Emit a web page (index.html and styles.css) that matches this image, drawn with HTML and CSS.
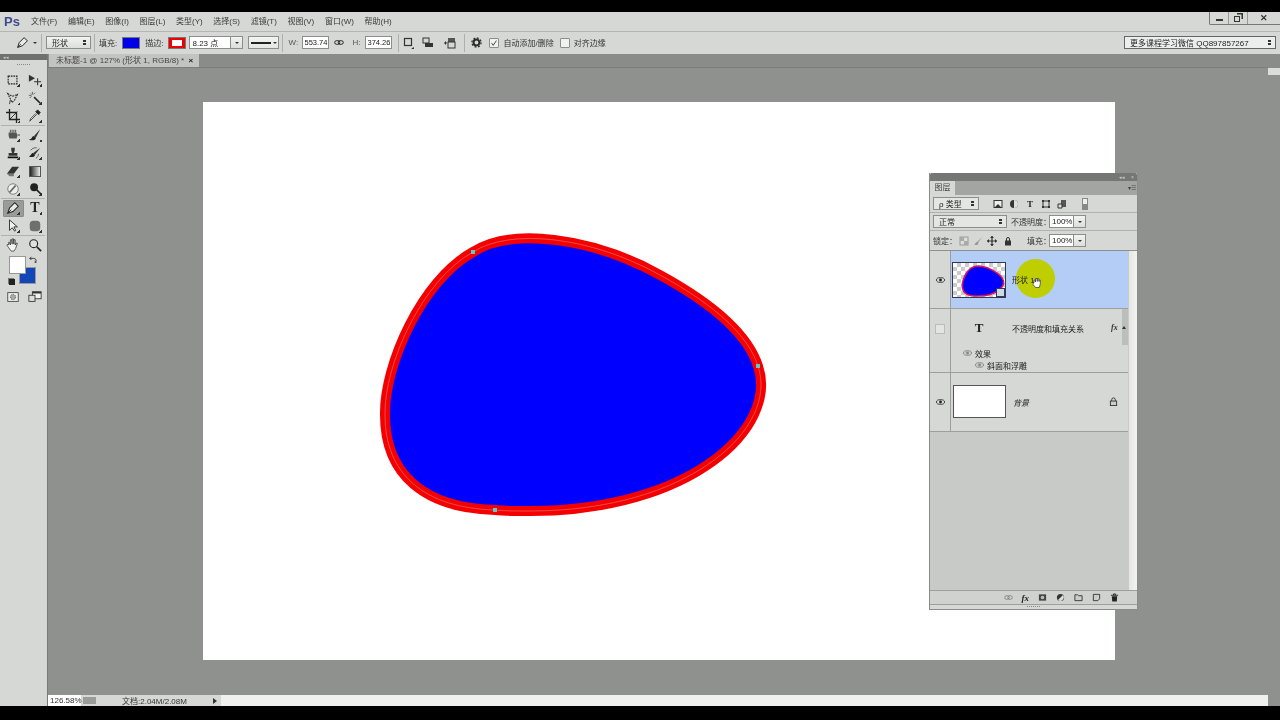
FILE: index.html
```html
<!DOCTYPE html>
<html>
<head>
  <title>Photoshop</title>
  <link rel="stylesheet" href="styles.css">
</head>
<body>
<div class="app">
  <div class="menubar">
    <span class="logo">Ps</span>
    <span class="menu-item">文件(F)</span>
    <span class="menu-item">编辑(E)</span>
    <span class="menu-item">图像(I)</span>
    <span class="menu-item">图层(L)</span>
    <span class="menu-item">类型(Y)</span>
    <span class="menu-item">选择(S)</span>
    <span class="menu-item">滤镜(T)</span>
    <span class="menu-item">视图(V)</span>
    <span class="menu-item">窗口(W)</span>
    <span class="menu-item">帮助(H)</span>
    <div class="win-btns">
      <span class="win-btn"><i class="win-min"></i></span>
      <span class="win-btn"><i class="win-max"></i></span>
      <span class="win-btn win-close">✕</span>
    </div>
  </div>

  <div class="options">
    <svg class="opt-pen" viewBox="0 0 16 16"><path d="M2 14l2-6 6-6 4 4-6 6z" fill="#e8e9e7" stroke="#222" stroke-width="1.2"/><path d="M2 14l4-4" stroke="#222"/></svg>
    <span class="caret opt-caret"></span>
    <span class="sep"></span>
    <span class="select sel-mode">形状<i class="updown"></i></span>
    <span class="sep"></span>
    <span class="opt-label">填充:</span>
    <span class="swatch swatch-fill"></span>
    <span class="opt-label label-stroke">描边:</span>
    <span class="swatch swatch-stroke"><i></i></span>
    <span class="input in-size">8.23 点</span>
    <span class="btn-caret"><span class="caret"></span></span>
    <span class="line-pick"><i></i><span class="caret"></span></span>
    <span class="sep sep-w"></span>
    <span class="opt-label dim">W:</span>
    <span class="input in-num">553.74</span>
    <svg class="opt-link" viewBox="0 0 14 8"><rect x="1" y="1.500" width="7" height="5" rx="2.500" fill="none" stroke="#222" stroke-width="1.400"/><rect x="6" y="1.500" width="7" height="5" rx="2.500" fill="none" stroke="#222" stroke-width="1.400"/></svg>
    <span class="opt-label dim">H:</span>
    <span class="input in-num in-h">374.26</span>
    <span class="sep sep-h"></span>
    <svg class="opt-ico" viewBox="0 0 12 12"><rect x="2.500" y="1.500" width="7" height="7" fill="#d6d8d5" stroke="#333" stroke-width="1.200"/><path d="M9 12h3V10z" fill="#333"/></svg>
    <svg class="opt-ico ico-2" viewBox="0 0 12 12"><rect x="1" y="1" width="6" height="5" fill="#d6d8d5" stroke="#333"/><rect x="3" y="6" width="8" height="4" fill="#333"/></svg>
    <svg class="opt-ico ico-3" viewBox="0 0 12 12"><path d="M0 6h3M1.500 4.500v3" stroke="#333"/><rect x="4" y="1" width="7" height="4" fill="#555"/><rect x="4" y="5" width="7" height="6" fill="#d6d8d5" stroke="#333"/></svg>
    <span class="sep sep-gear"></span>
    <svg class="opt-gear" viewBox="0 0 12 12"><circle cx="6" cy="6" r="3.200" fill="none" stroke="#2b2b2b" stroke-width="2.200"/><circle cx="6" cy="6" r="5" fill="none" stroke="#2b2b2b" stroke-width="1.400" stroke-dasharray="2 1.900"/></svg>
    <span class="check checked"><svg viewBox="0 0 10 10"><path d="M2 5l2 3 4-6" fill="none" stroke="#333" stroke-width="1.100"/></svg></span>
    <span class="opt-label check-text">自动添加/删除</span>
    <span class="check check-2"></span>
    <span class="opt-label check-text">对齐边缘</span>
    <span class="select sel-work">更多课程学习微信 QQ897857267<i class="updown"></i></span>
  </div>

  <div class="workspace">
    <div class="tools">
      <div class="tools-head">◂◂</div>
      <div class="grip"></div>
      <div class="tool-grid">
        <svg class="tool" viewBox="0 0 16 16"><rect x="2.500" y="3.500" width="10" height="9" fill="none" stroke="#222" stroke-width="1.300" stroke-dasharray="2 1"/></svg>
        <svg class="tool" viewBox="0 0 16 16"><path d="M1 2l7 4-7 4z" fill="#333"/><path d="M11 6v8M7 10h8" stroke="#333" stroke-width="1.200"/></svg>
        <svg class="tool" viewBox="0 0 16 16"><path d="M2 3l5 3 6-2-3 6-3 3-2-4z" fill="none" stroke="#222" stroke-width="1.200" stroke-dasharray="2 1"/><path d="M5 10l-1 5" stroke="#333"/></svg>
        <svg class="tool" viewBox="0 0 16 16"><path d="M7 7l7 7" stroke="#222" stroke-width="1.800"/><path d="M5 1v3M1 5h3M3 3l1 1M8 2L6 4M2 8l2-2" stroke="#555"/></svg>
        <svg class="tool" viewBox="0 0 16 16"><path d="M4 0v12h12M0 4h12v12" fill="none" stroke="#222" stroke-width="1.500"/><path d="M4 12L13 3" stroke="#222"/></svg>
        <svg class="tool" viewBox="0 0 16 16"><path d="M10 6l-7 7-1 1 1-3 6-6" fill="#eee" stroke="#333"/><path d="M9 3l4 4M11 1l3 3-2 2-3-3z" fill="#222" stroke="#222"/></svg>
        <div class="tool-line"></div>
        <svg class="tool" viewBox="0 0 16 16"><path d="M3 9V5h9l1 4-1 3H4z" fill="#555"/><path d="M5 2v3M7 2v3M9 2v3M11 2v3" stroke="#444"/><path d="M13 8l3 0" stroke="#333"/></svg>
        <svg class="tool" viewBox="0 0 16 16"><path d="M14 1L7 9l2 2z" fill="#333"/><path d="M7 9c-3 0-2 4-6 4 3 2 8 1 8-2z" fill="#222"/></svg>
        <svg class="tool" viewBox="0 0 16 16"><path d="M6 2h4v3l-1 3h4v3H3V8h4L6 5z" fill="#333"/><rect x="2" y="12" width="12" height="2" fill="#111"/></svg>
        <svg class="tool" viewBox="0 0 16 16"><path d="M14 2L6 8l2 2z" fill="#333"/><path d="M6 8c-3 0-2 3-5 4 3 1 7 1 7-2z" fill="#222"/><path d="M3 5c2-3 5-3 7-3M12 9c0 2-1 4-3 5" fill="none" stroke="#555"/></svg>
        <svg class="tool" viewBox="0 0 16 16"><path d="M1 11l6-8h8l-6 8z" fill="#333"/><path d="M1 11l3 3h5l0-3z" fill="#777"/></svg>
        <div class="tool gradient"></div>
        <svg class="tool" viewBox="0 0 16 16"><circle cx="8" cy="8" r="6" fill="#eee" stroke="#777"/><path d="M4 12l7-8" stroke="#666" stroke-width="2"/></svg>
        <svg class="tool" viewBox="0 0 16 16"><circle cx="7" cy="6" r="4.500" fill="#222"/><path d="M10 9l5 5" stroke="#222" stroke-width="2"/></svg>
        <div class="tool-line"></div>
        <div class="tool-on"><svg class="tool" viewBox="0 0 16 16"><path d="M2 14l2-6 6-6 4 4-6 6z" fill="#e8e9e7" stroke="#222" stroke-width="1.200"/><path d="M2 14l4-4" stroke="#222"/></svg></div>
        <span class="tool tool-t">T</span>
        <svg class="tool" viewBox="0 0 16 16"><path d="M4 1v12l3-3 3 4 1-1-2-4h4z" fill="#f2f2f2" stroke="#222"/></svg>
        <svg class="tool" viewBox="0 0 16 16"><rect x="2" y="2" width="12" height="12" rx="4" fill="#6e706d"/></svg>
        <div class="tool-line"></div>
        <svg class="tool no-tri" viewBox="0 0 16 16"><path d="M3 8V5h1l1 3V2h1.500l.5 5V1h1.500l.5 6V2h1.500v6l1-2h1.500l-2 6-2 3H6L3 11 1 8l1-1z" fill="#f4f4f4" stroke="#222" stroke-width=".8"/></svg>
        <svg class="tool no-tri" viewBox="0 0 16 16"><circle cx="6.500" cy="6.500" r="4.500" fill="#dfe0de" stroke="#222" stroke-width="1.300"/><path d="M10 10l5 5" stroke="#222" stroke-width="2"/></svg>
      </div>
      <div class="colors">
        <span class="color-bg"></span>
        <span class="color-fg"></span>
        <span class="color-reset"></span>
        <svg class="color-swap" viewBox="0 0 10 10"><path d="M1 3h5c2 0 3 1 3 4M1 3l2-2M1 3l2 2M9 8l-2-2M9 8l-2 0" fill="none" stroke="#222"/></svg>
      </div>
      <div class="tool-mode">
        <svg class="tool" viewBox="0 0 16 16"><rect x="2" y="3" width="12" height="10" fill="#eee" stroke="#444"/><circle cx="8" cy="8" r="3" fill="#aaa" stroke="#444" stroke-dasharray="1 1"/></svg>
        <svg class="tool" viewBox="0 0 16 16"><rect x="5" y="2" width="10" height="8" fill="#f2f2f2" stroke="#333"/><rect x="5" y="2" width="10" height="2" fill="#333"/><rect x="1" y="6" width="7" height="7" fill="#ddd" stroke="#333"/></svg>
      </div>
    </div>

    <div class="main">
      <div class="tabbar">
        <div class="tab">未标题-1 @ 127% (形状 1, RGB/8) * <span class="tab-x">×</span></div>
      </div>
      <div class="canvas-area">
        <div class="canvas">
          <svg class="shape" viewBox="203 102 912 558">
            <path d="M473 252C510 228 590 236 660 275C715 305 748 335 758 366C779 428 690 511 530 511C515 511 505 511 495 510C425 508 385 475 385 415C384 365 422 280 473 252Z" fill="#0000ff" stroke="#f50000" stroke-width="10"/>
            <path d="M473 252C510 228 590 236 660 275C715 305 748 335 758 366C779 428 690 511 530 511C515 511 505 511 495 510C425 508 385 475 385 415C384 365 422 280 473 252Z" fill="none" stroke="#e27c7c" stroke-width=".6"/>
            <rect x="471" y="250" width="4" height="4" fill="#5fc8c8"/>
            <rect x="756" y="364" width="4" height="4" fill="#5fc8c8"/>
            <rect x="493" y="508" width="4" height="4" fill="#5fc8c8"/>
          </svg>
        </div>
      </div>
      <div class="statusbar">
        <span class="zoom">126.58%</span>
        <span class="zoom-ico"></span>
        <span class="doc">文档:2.04M/2.08M</span>
        <span class="status-arrow"></span>
        <span class="status-track"></span>
      </div>
    </div>
    <div class="vscroll"></div>
  </div>
</div>

<div class="panel">
  <div class="panel-top"><span>◂◂</span><span>×</span></div>
  <div class="panel-tabs"><span class="panel-tab">图层</span><span class="panel-menu">▾☰</span></div>
  <div class="panel-row filter-row">
    <span class="select sel-filter">ρ 类型<i class="updown"></i></span>
    <svg class="fil-ico" viewBox="0 0 10 10"><rect x="1" y="1.500" width="8" height="7" fill="#eee" stroke="#333"/><path d="M2 8l3-3 3 3z" fill="#333"/></svg>
    <svg class="fil-ico" viewBox="0 0 10 10"><circle cx="5" cy="5" r="4" fill="#333"/><path d="M5 1a4 4 0 0 1 0 8z" fill="#ddd"/></svg>
    <span class="fil-t">T</span>
    <svg class="fil-ico" viewBox="0 0 10 10"><rect x="2" y="2" width="6" height="6" fill="none" stroke="#333"/><path d="M1 1h2v2H1zM7 1h2v2H7zM1 7h2v2H1zM7 7h2v2H7z" fill="#333"/></svg>
    <svg class="fil-ico" viewBox="0 0 10 10"><path d="M4 1h5v7H4z" fill="#555"/><path d="M1 5h4v4H1z" fill="#ddd" stroke="#333"/></svg>
    <span class="fil-toggle"></span>
  </div>
  <div class="panel-row blend-row">
    <span class="select sel-blend">正常<i class="updown"></i></span>
    <span class="panel-label">不透明度：</span>
    <span class="input in-pct">100%</span>
    <span class="btn-caret"><span class="caret"></span></span>
  </div>
  <div class="panel-row lock-row">
    <span class="panel-label">锁定：</span>
    <svg class="lock-ico" viewBox="0 0 10 10"><rect x="1" y="1" width="8" height="8" fill="#ddd" stroke="#999"/><path d="M1 1h4v4H1zM5 5h4v4H5z" fill="#aaa"/></svg>
    <svg class="lock-ico" viewBox="0 0 10 10"><path d="M9 1L4 6l1 1zM4 6C2 6 3 8 1 9c3 0 5 0 4-2z" fill="#999"/></svg>
    <svg class="lock-ico" viewBox="0 0 10 10"><path d="M5 0v10M0 5h10" stroke="#333" stroke-width="1.200"/><path d="M5 0L3 2h4zM5 10L3 8h4zM0 5l2-2v4zM10 5L8 3v4z" fill="#333"/></svg>
    <svg class="lock-ico lock-last" viewBox="0 0 10 10"><rect x="2" y="4.500" width="6" height="5" fill="#333"/><path d="M3.500 5V3a1.500 1.500 0 0 1 3 0v2" fill="none" stroke="#333"/></svg>
    <span class="panel-label fill-label">填充：</span>
    <span class="input in-pct">100%</span>
    <span class="btn-caret"><span class="caret"></span></span>
  </div>
  <div class="panel-body">
    <div class="layers">
      <div class="layer layer-shape">
        <div class="eye-col"><svg class="eye" viewBox="0 0 10 6"><ellipse cx="5" cy="3" rx="4.500" ry="2.600" fill="#ddd" stroke="#333"/><circle cx="5" cy="3" r="1.600" fill="#222"/></svg></div>
        <div class="layer-main selected">
          <div class="spot"></div>
          <div class="thumb">
            <svg class="thumb-shape" viewBox="378 228 392 292"><path d="M473 252C510 228 590 236 660 275C715 305 748 335 758 366C779 428 690 511 530 511C515 511 505 511 495 510C425 508 385 475 385 415C384 365 422 280 473 252Z" fill="#0000ff" stroke="#e0105a" stroke-width="14"/></svg>
            <span class="thumb-badge"></span>
          </div>
          <span class="layer-name shape-name">形状 1</span>
          <svg class="hand" viewBox="0 0 12 12"><path d="M3 6V3h1l.5 2V1.500H6l.3 3V1.500h1.400l.3 3V3h1.300v4l-1 3.500H4.500L2 7.500l.5-1z" fill="#fff" stroke="#333" stroke-width=".7"/></svg>
        </div>
      </div>
      <div class="layer layer-text">
        <div class="eye-col eye-col-top"><span class="eye-off"></span></div>
        <div class="layer-main text-main">
          <div class="text-top">
            <span class="t-thumb">T</span>
            <span class="layer-name">不透明度和填充关系</span>
            <span class="fx">fx</span>
            <span class="fx-arrow"></span>
          </div>
          <div class="effect effect-1"><svg class="eye eye-dim" viewBox="0 0 10 6"><ellipse cx="5" cy="3" rx="4.500" ry="2.600" fill="#ccc" stroke="#888"/><circle cx="5" cy="3" r="1.600" fill="#888"/></svg>效果</div>
          <div class="effect effect-2"><svg class="eye eye-dim" viewBox="0 0 10 6"><ellipse cx="5" cy="3" rx="4.500" ry="2.600" fill="#ccc" stroke="#888"/><circle cx="5" cy="3" r="1.600" fill="#888"/></svg>斜面和浮雕</div>
        </div>
      </div>
      <div class="layer layer-bg">
        <div class="eye-col"><svg class="eye" viewBox="0 0 10 6"><ellipse cx="5" cy="3" rx="4.500" ry="2.600" fill="#ddd" stroke="#333"/><circle cx="5" cy="3" r="1.600" fill="#222"/></svg></div>
        <div class="layer-main">
          <div class="bg-thumb"></div>
          <span class="layer-name bg-name">背景</span>
          <svg class="bg-lock" viewBox="0 0 10 10"><rect x="1.500" y="4.500" width="7" height="5" fill="#ccc" stroke="#333"/><path d="M3 4.500V3a2 2 0 0 1 4 0v1.500" fill="none" stroke="#333"/></svg>
        </div>
      </div>
      <div class="layers-empty"></div>
    </div>
    <div class="panel-scroll"><span class="panel-thumb"></span></div>
  </div>
  <div class="panel-foot">
    <svg class="foot-ico" viewBox="0 0 12 8"><rect x="1" y="1.500" width="6" height="5" rx="2.500" fill="none" stroke="#777"/><rect x="5" y="1.500" width="6" height="5" rx="2.500" fill="none" stroke="#777"/></svg>
    <span class="foot-fx">fx</span>
    <svg class="foot-ico" viewBox="0 0 10 10"><rect x="1" y="1.500" width="8" height="7" fill="#444"/><circle cx="5" cy="5" r="2" fill="#bbb"/></svg>
    <svg class="foot-ico" viewBox="0 0 10 10"><circle cx="5" cy="5" r="4" fill="#333"/><path d="M7.800 2.200a4 4 0 0 1-5.600 5.600z" fill="#ddd"/></svg>
    <svg class="foot-ico" viewBox="0 0 10 10"><path d="M1 2h3l1 1h4v5.500H1z" fill="#ccc" stroke="#333"/></svg>
    <svg class="foot-ico" viewBox="0 0 10 10"><path d="M1.500 1.500h7v5l-2 2h-5z" fill="#ccc" stroke="#333"/></svg>
    <svg class="foot-ico" viewBox="0 0 10 10"><path d="M1 2.500h8M4 2.500V1h2v1.500" stroke="#222" fill="none"/><path d="M2 3.500h6l-.5 6h-5z" fill="#222"/></svg>
  </div>
  <div class="panel-grip"><i></i></div>
</div>
</body>
</html>
```

FILE: styles.css
```css
html, body {
  margin: 0;
  height: 720px;
  overflow: hidden;
  background: #000;
}
body {
  position: relative;
  font-family: "Liberation Sans", "Noto Sans CJK SC", sans-serif;
  font-size: 8px;
  color: #222;
  filter: blur(.35px);
}
.app {
  height: 720px;
  padding: 12px 0 14px;
  box-sizing: border-box;
  display: flex;
  flex-direction: column;
}

/* menu */
.menubar {
  height: 19px;
  flex: none;
  background: #d6d8d5;
  display: flex;
  align-items: center;
  border-bottom: 1px solid #b4b6b3;
}
.logo {
  width: 31px;
  padding-left: 4px;
  box-sizing: border-box;
  font: bold 13px "Liberation Sans", sans-serif;
  color: #3f4c8c;
}
.menu-item {
  margin: -2px 10.700px 0 0;
  color: #3a3a3a;
}
.win-btns {
  margin-left: auto;
  display: flex;
  align-self: flex-start;
  height: 12px;
  border-left: 1px solid #777;
  border-bottom: 1px solid #777;
  border-bottom-left-radius: 2px;
}
.win-btn {
  width: 18px;
  border-right: 1px solid #999;
  display: flex;
  align-items: center;
  justify-content: center;
}
.win-close {
  width: 32px;
  border: 0;
  font-size: 9px;
  font-weight: bold;
  color: #333;
}
.win-min {
  width: 7px;
  height: 2px;
  margin-top: 3px;
  background: #333;
}
.win-max {
  width: 4px;
  height: 4px;
  margin: 1px 0 0 -2px;
  background: #d6d8d5;
  border: 1px solid #333;
  box-shadow: 2px -2px 0 -.5px #d6d8d5, 3px -3px 0 0 #333;
}

/* options bar */
.options {
  height: 21px;
  flex: none;
  background: #d6d8d5;
  border-bottom: 1px solid #6b6d6a;
  display: flex;
  align-items: center;
  padding: 0 0 1px 16px;
  margin-bottom: -1px;
}
.opt-pen {
  width: 13px;
  height: 13px;
}
.caret {
  display: inline-block;
  width: 0;
  height: 0;
  border: 2px solid transparent;
  border-top: 2px solid #333;
  border-bottom: 0;
}
.opt-caret {
  margin-left: 4px;
}
.sep {
  width: 1px;
  height: 18px;
  background: #aeb0ad;
  margin: 0 4px;
}
.select {
  height: 13px;
  border: 1px solid #8c8e8b;
  background: linear-gradient(#f3f4f2, #dcdedb);
  display: flex;
  align-items: center;
  padding-left: 5px;
  box-sizing: border-box;
  position: relative;
}
.updown {
  position: absolute;
  right: 4px;
  top: 3px;
  width: 3px;
  height: 5px;
  border-top: 2px solid #333;
  border-bottom: 2px solid #333;
  box-sizing: border-box;
}
.sel-mode {
  width: 45px;
  margin-right: -1px;
}
.opt-label {
  color: #333;
  white-space: nowrap;
}
.swatch {
  width: 18px;
  height: 12px;
  margin-left: 5px;
  border: 1px solid #777;
  box-sizing: border-box;
}
.swatch-fill {
  background: #0000e6;
}
.label-stroke {
  margin-left: 5px;
}
.swatch-stroke {
  background: #ee0000;
  padding: 2px 3px;
}
.swatch-stroke i {
  display: block;
  height: 100%;
  background: #fff;
}
.input {
  height: 13px;
  background: #fff;
  border: 1px solid #8c8e8b;
  box-sizing: border-box;
  display: flex;
  align-items: center;
  padding-left: 2px;
  white-space: nowrap;
}
.in-size {
  width: 42px;
  margin-left: 3px;
}
.btn-caret {
  width: 12px;
  height: 13px;
  box-sizing: border-box;
  border: 1px solid #8c8e8b;
  border-left: 0;
  background: linear-gradient(#f3f4f2, #dcdedb);
  display: flex;
  align-items: center;
  justify-content: center;
}
.line-pick {
  width: 31px;
  height: 13px;
  margin-left: 5px;
  box-sizing: border-box;
  border: 1px solid #8c8e8b;
  background: linear-gradient(#f3f4f2, #e4e6e3);
  display: flex;
  align-items: center;
  padding-left: 2px;
}
.line-pick i {
  width: 20px;
  height: 2px;
  background: #222;
  margin-right: 2px;
}
.sep-w {
  margin: 0 5px 0 3px;
}
.dim {
  color: #555;
  width: 14px;
}
.in-num {
  width: 27px;
  padding-left: 1px;
  font-size: 7.500px;
}
.opt-link {
  width: 10px;
  height: 7px;
  margin: 0 8px 0 5px;
}
.in-h {
  margin-left: -1px;
}
.sep-h {
  margin: 0 3px 0 6px;
}
.opt-ico {
  width: 12px;
  height: 12px;
  margin-right: 8px;
}
.ico-2 {
  margin-right: 10px;
}
.ico-3 {
  margin-right: 8px;
}
.sep-gear {
  margin: 0 6px 0 0;
}
.opt-gear {
  width: 11px;
  height: 11px;
  margin-right: 7px;
}
.check {
  width: 10px;
  height: 10px;
  border: 1px solid #8c8e8b;
  border-radius: 1px;
  background: #f1f2f0;
  box-sizing: border-box;
  display: block;
}
.check svg {
  display: block;
}
.check-text {
  margin-left: 4px;
}
.check-2 {
  margin-left: 6px;
}
.sel-work {
  width: 152px;
  margin-left: auto;
  margin-right: 4px;
  color: #222;
  background: #eceded;
  border-color: #666;
}

/* workspace */
.workspace {
  flex: 1;
  display: flex;
  min-height: 0;
}
.tools {
  width: 47px;
  flex: none;
  background: #d6d8d5;
  border-right: 1px solid #777976;
}
.tools-head {
  height: 6px;
  background: #6f716e;
  color: #c9cbc8;
  font-size: 5px;
  line-height: 6px;
  padding-left: 3px;
}
.grip {
  width: 13px;
  height: 1px;
  margin: 4px auto 5px;
  border-top: 1px dotted #888;
}
.tool-grid {
  display: grid;
  grid-template-columns: 22px 22px;
  padding-left: 2px;
  justify-items: center;
  align-items: center;
}
.tool {
  width: 14px;
  height: 14px;
  display: block;
  margin: 2px 0;
}
.tool-grid .tool {
  background: linear-gradient(135deg, transparent 50%, #333 50%) right bottom / 3px 3px no-repeat;
}
.tool-grid .no-tri {
  background: none;
}
.tool-line {
  grid-column: 1 / 3;
  width: 44px;
  height: 1px;
  background: #b0b2af;
  margin-left: -2px;
}
.tool-grid .gradient {
  width: 12px;
  height: 11px;
  margin: 3px 1px;
  background: linear-gradient(90deg, #222, #eee);
  border: 1px solid #555;
  box-sizing: border-box;
}
.tool-on {
  width: 21px;
  height: 17px;
  background: #9a9c99;
  border: 1px solid #8a8c89;
  box-sizing: border-box;
  border-radius: 1px;
  display: flex;
  align-items: center;
  justify-content: center;
}
.tool-on .tool {
  margin: 0;
}
.tool-t {
  font: bold 14px "Liberation Serif", serif;
  text-align: center;
  line-height: 14px;
}
.colors {
  position: relative;
  height: 32px;
  margin-top: 2px;
}
.color-fg {
  position: absolute;
  left: 19px;
  top: 11px;
  width: 17px;
  height: 17px;
  background: #1245b8;
  border: 1px solid #999;
  box-sizing: border-box;
}
.color-bg {
  position: absolute;
  left: 9px;
  top: 0;
  width: 17px;
  height: 18px;
  background: #fff;
  border: 1px solid #999;
  box-sizing: border-box;
  z-index: 1;
}
.color-reset {
  position: absolute;
  left: 9px;
  top: 23px;
  width: 6px;
  height: 6px;
  background: #222;
  box-shadow: -1px -1px 0 #777;
}
.color-swap {
  position: absolute;
  left: 29px;
  top: 0;
  width: 8px;
  height: 8px;
}
.tool-mode {
  display: grid;
  grid-template-columns: 22px 22px;
  padding-left: 2px;
  justify-items: center;
}

.main {
  flex: 1;
  display: flex;
  flex-direction: column;
  min-width: 0;
}
.tabbar {
  height: 13px;
  flex: none;
  background: #8a8c89;
  border-bottom: 1px solid #7c7e7b;
  display: flex;
}
.tab {
  width: 150px;
  margin-left: 1px;
  box-sizing: border-box;
  background: #c2c4c1;
  color: #444;
  line-height: 13px;
  padding-left: 7px;
  white-space: nowrap;
}
.tab-x {
  margin-left: 2px;
  font-weight: bold;
  color: #222;
}
.canvas-area {
  flex: 1;
  min-height: 0;
  background: #8f918e;
  padding: 34px 0 0 155px;
}
.canvas {
  width: 912px;
  height: 558px;
  background: #fff;
}
.shape {
  display: block;
  width: 912px;
  height: 558px;
}
.statusbar {
  height: 11px;
  flex: none;
  background: #d6d8d5;
  display: flex;
  align-items: center;
  color: #333;
}
.zoom {
  width: 33px;
  height: 11px;
  line-height: 11px;
  background: #fff;
  padding-left: 2px;
  box-sizing: border-box;
}
.zoom-ico {
  width: 13px;
  height: 7px;
  margin-left: 2px;
  background: #9a9c99;
}
.doc {
  margin-left: 26px;
  width: 91px;
  white-space: nowrap;
}
.status-arrow {
  width: 0;
  height: 0;
  border-left: 4px solid #333;
  border-top: 3px solid transparent;
  border-bottom: 3px solid transparent;
}
.status-track {
  flex: 1;
  height: 11px;
  margin-left: 4px;
  background: #f0f1ef;
}
.vscroll {
  width: 12px;
  flex: none;
  background: linear-gradient(#8a8c89 14px, #dcdddb 14px, #dcdddb 21px, #8f918e 21px);
}

/* floating layers panel */
.panel {
  position: absolute;
  left: 929px;
  top: 173px;
  width: 209px;
  height: 437px;
  box-sizing: border-box;
  background: #d6d8d5;
  border: 1px solid #8a8c89;
  border-top: 0;
  display: flex;
  flex-direction: column;
}
.panel-top {
  height: 8px;
  background: #757774;
  border-radius: 2px 2px 0 0;
  color: #ccc;
  font-size: 5px;
  line-height: 8px;
  display: flex;
  justify-content: flex-end;
  gap: 6px;
  padding-right: 3px;
  flex: none;
}
.panel-tabs {
  height: 14px;
  background: #a3a5a2;
  display: flex;
  justify-content: space-between;
  flex: none;
}
.panel-tab {
  width: 25px;
  background: #d6d8d5;
  line-height: 14px;
  text-align: center;
  color: #444;
}
.panel-menu {
  color: #444;
  font-size: 6px;
  line-height: 14px;
  padding-right: 1px;
}
.panel-row {
  display: flex;
  align-items: center;
  flex: none;
  box-sizing: border-box;
  border-bottom: 1px solid #b0b2af;
  padding-left: 3px;
}
.filter-row {
  height: 18px;
}
.sel-filter {
  width: 46px;
  background: #e4e6e3;
  margin-right: 11px;
}
.fil-ico {
  width: 10px;
  height: 10px;
  margin: 0 3px;
}
.fil-t {
  width: 10px;
  margin: 0 3px;
  text-align: center;
  font: bold 9px "Liberation Serif", serif;
}
.fil-toggle {
  width: 6px;
  height: 12px;
  margin-left: 12px;
  background: linear-gradient(#eee 50%, #888 50%);
  border: 1px solid #888;
  box-sizing: border-box;
}
.blend-row {
  height: 18px;
}
.sel-blend {
  width: 74px;
  margin-right: 4px;
  background: #e4e6e3;
}
.panel-label {
  white-space: nowrap;
  color: #333;
}
.in-pct {
  width: 25px;
  margin-left: -2px;
}
.lock-row {
  height: 20px;
  border-bottom: 1px solid #8f918e;
}
.lock-ico {
  width: 10px;
  height: 10px;
  margin-left: 4px;
}
.lock-ico:first-of-type {
  margin-left: 2px;
}
.lock-last {
  margin-left: 6px;
}
.fill-label {
  margin-left: 14px;
}
.panel-body {
  flex: 1;
  min-height: 0;
  display: flex;
}
.layers {
  flex: 1;
  display: flex;
  flex-direction: column;
}
.layer {
  display: flex;
  flex: none;
  box-sizing: border-box;
  border-bottom: 1px solid #9d9f9c;
}
.layer-shape {
  height: 58px;
}
.layer-text {
  height: 64px;
}
.layer-bg {
  height: 59px;
}
.eye-col {
  width: 20px;
  flex: none;
  border-right: 1px solid #9d9f9c;
  display: flex;
  align-items: center;
  justify-content: center;
}
.eye-col-top {
  align-items: flex-start;
}
.eye {
  width: 9px;
  height: 6px;
}
.eye-off {
  width: 8px;
  height: 8px;
  margin-top: 15px;
  border: 1px solid #bbb;
  background: #e4e5e3;
}
.layer-main {
  flex: 1;
  display: flex;
  align-items: center;
  position: relative;
}
.selected {
  background: #b4cdf6;
}
.thumb {
  width: 54px;
  height: 36px;
  margin-left: 1px;
  box-sizing: border-box;
  border: 1px solid #2f3a55;
  background: repeating-conic-gradient(#ccc 0 25%, #fff 0 50%) 0 0 / 8px 8px;
  position: relative;
}
.thumb-shape {
  position: absolute;
  left: 8px;
  top: 2px;
  width: 44px;
  height: 32px;
}
.thumb-badge {
  position: absolute;
  right: 0;
  bottom: 0;
  width: 7px;
  height: 7px;
  border: 1px solid #2f3a55;
  background: #cfd8ea;
}
.layer-name {
  margin-left: 6px;
  color: #222;
  white-space: nowrap;
}
.shape-name {
  position: relative;
}
.text-main {
  display: block;
}
.text-top {
  height: 38px;
  display: flex;
  align-items: center;
}
.t-thumb {
  width: 54px;
  text-align: center;
  margin-left: 1px;
  font: bold 13px "Liberation Serif", serif;
}
.fx {
  position: absolute;
  left: 160px;
  top: 14px;
  font: italic bold 8px "Liberation Serif", serif;
  color: #333;
}
.fx-arrow {
  position: absolute;
  left: 171px;
  top: 17px;
  border: 2px solid transparent;
  border-bottom: 3px solid #333;
  border-top: 0;
}
.effect {
  display: flex;
  align-items: center;
  gap: 3px;
  height: 12px;
  color: #222;
}
.effect-1 {
  padding-left: 12px;
}
.effect-2 {
  padding-left: 24px;
}
.eye-dim {
  width: 9px;
}
.bg-thumb {
  width: 53px;
  height: 33px;
  margin: 0 0 2px 2px;
  box-sizing: border-box;
  background: #fff;
  border: 1px solid #555;
}
.bg-name {
  margin-left: 7px;
  font-style: italic;
}
.bg-lock {
  position: absolute;
  left: 158px;
  top: 24px;
  width: 9px;
  height: 9px;
}
.layers-empty {
  flex: 1;
  background: #c8cac7;
}
.panel-scroll {
  width: 9px;
  flex: none;
  background: linear-gradient(90deg, #e6e7e5, #f2f2f1);
  border-left: 1px solid #c8cac7;
  box-sizing: border-box;
}
.panel-thumb {
  display: block;
  width: 6px;
  height: 36px;
  margin: 58px 0 0 -7px;
  background: #bcbeba;
}
.panel-foot {
  height: 13px;
  flex: none;
  background: #d0d2cf;
  border-top: 1px solid #9d9f9c;
  border-bottom: 1px solid #9d9f9c;
  display: flex;
  align-items: center;
  justify-content: flex-end;
  gap: 9px;
  padding-right: 18px;
}
.foot-ico {
  width: 9px;
  height: 9px;
}
.foot-fx {
  font: italic bold 9px "Liberation Serif", serif;
  color: #222;
}
.panel-grip {
  height: 4px;
  flex: none;
  display: flex;
  justify-content: center;
}
.panel-grip i {
  width: 13px;
  border-top: 1px dotted #888;
  margin-top: 1px;
}

/* cursor highlight from the recording */
.spot {
  position: absolute;
  left: 65px;
  top: 8px;
  width: 39px;
  height: 39px;
  border-radius: 50%;
  background: #bfce00;
}
.hand {
  position: absolute;
  left: 80px;
  top: 26px;
  width: 12px;
  height: 12px;
}
```
